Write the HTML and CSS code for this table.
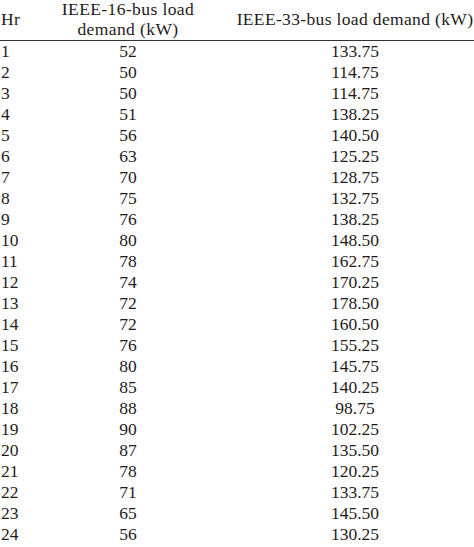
FILE: index.html
```html
<!DOCTYPE html>
<html>
<head>
<meta charset="utf-8">
<link rel="stylesheet" href="styles.css">
</head>
<body>
<table class="load-table">
  <colgroup>
    <col class="c-hr">
    <col class="c-16">
    <col class="c-33">
  </colgroup>
  <thead>
    <tr>
      <th class="hr">Hr</th>
      <th class="mid">IEEE-16-bus load<br>demand (kW)</th>
      <th class="right">IEEE-33-bus load demand (kW)</th>
    </tr>
  </thead>
  <tbody>
    <tr><td class="hr">1</td><td class="mid">52</td><td class="right">133.75</td></tr>
    <tr><td class="hr">2</td><td class="mid">50</td><td class="right">114.75</td></tr>
    <tr><td class="hr">3</td><td class="mid">50</td><td class="right">114.75</td></tr>
    <tr><td class="hr">4</td><td class="mid">51</td><td class="right">138.25</td></tr>
    <tr><td class="hr">5</td><td class="mid">56</td><td class="right">140.50</td></tr>
    <tr><td class="hr">6</td><td class="mid">63</td><td class="right">125.25</td></tr>
    <tr><td class="hr">7</td><td class="mid">70</td><td class="right">128.75</td></tr>
    <tr><td class="hr">8</td><td class="mid">75</td><td class="right">132.75</td></tr>
    <tr><td class="hr">9</td><td class="mid">76</td><td class="right">138.25</td></tr>
    <tr><td class="hr">10</td><td class="mid">80</td><td class="right">148.50</td></tr>
    <tr><td class="hr">11</td><td class="mid">78</td><td class="right">162.75</td></tr>
    <tr><td class="hr">12</td><td class="mid">74</td><td class="right">170.25</td></tr>
    <tr><td class="hr">13</td><td class="mid">72</td><td class="right">178.50</td></tr>
    <tr><td class="hr">14</td><td class="mid">72</td><td class="right">160.50</td></tr>
    <tr><td class="hr">15</td><td class="mid">76</td><td class="right">155.25</td></tr>
    <tr><td class="hr">16</td><td class="mid">80</td><td class="right">145.75</td></tr>
    <tr><td class="hr">17</td><td class="mid">85</td><td class="right">140.25</td></tr>
    <tr><td class="hr">18</td><td class="mid">88</td><td class="right">98.75</td></tr>
    <tr><td class="hr">19</td><td class="mid">90</td><td class="right">102.25</td></tr>
    <tr><td class="hr">20</td><td class="mid">87</td><td class="right">135.50</td></tr>
    <tr><td class="hr">21</td><td class="mid">78</td><td class="right">120.25</td></tr>
    <tr><td class="hr">22</td><td class="mid">71</td><td class="right">133.75</td></tr>
    <tr><td class="hr">23</td><td class="mid">65</td><td class="right">145.50</td></tr>
    <tr><td class="hr">24</td><td class="mid">56</td><td class="right">130.25</td></tr>
  </tbody>
</table>
</body>
</html>
```
FILE: styles.css
```css
html, body {
  margin: 0;
  padding: 0;
  background: #ffffff;
}
body {
  font-family: "Liberation Serif", "Times New Roman", serif;
  color: #1f1b1c;
  overflow: hidden;
}
.load-table {
  border-collapse: collapse;
  table-layout: fixed;
  width: 474px;
}
.c-hr { width: 40px; }
.c-16 { width: 176px; }
.c-33 { width: 258px; }
.load-table th {
  font-weight: normal;
  font-size: 17.5px;
  letter-spacing: 0.4px;
  line-height: 19.5px;
  padding: 0 0 1px 0;
  border-bottom: 1.5px solid #333;
  vertical-align: middle;
  white-space: nowrap;
}
.load-table td {
  font-size: 17.5px;
  line-height: 21px;
  padding: 0;
  white-space: nowrap;
}
.hr { text-align: left; padding-left: 1px !important; }
.mid { text-align: center; }
.right { text-align: center; padding-left: 20px !important; }
.load-table th.right { letter-spacing: 0.35px; }
```
